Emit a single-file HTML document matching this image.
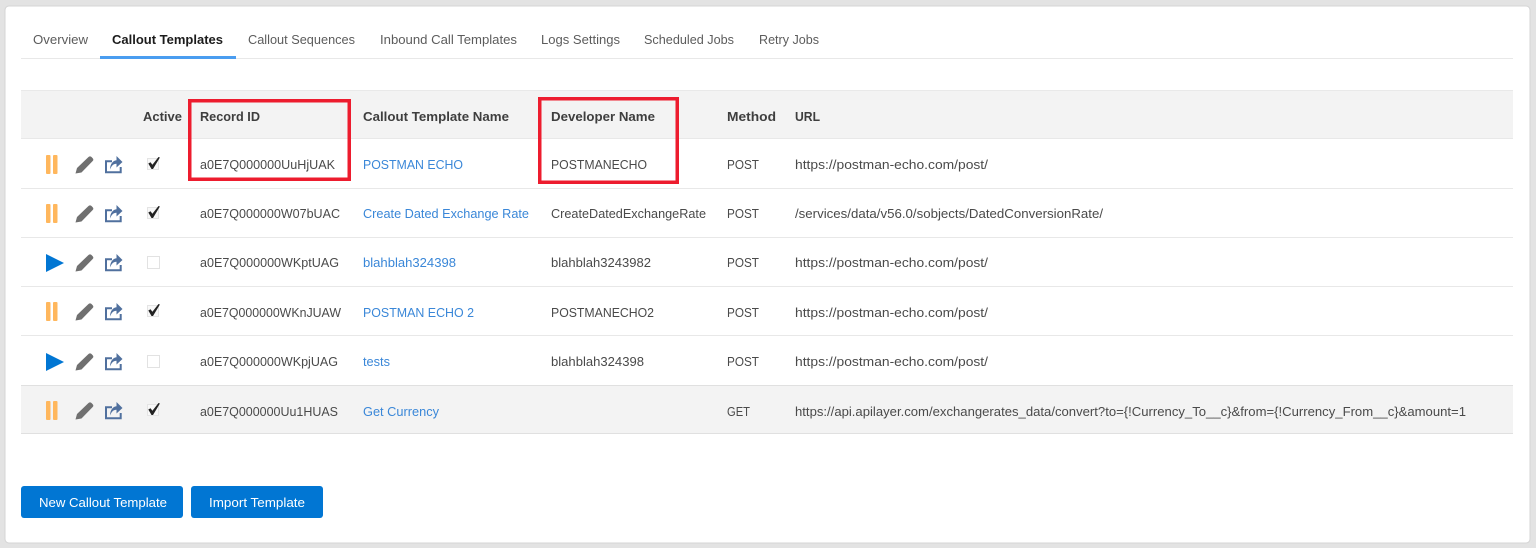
<!DOCTYPE html>
<html lang="en"><head><meta charset="utf-8"><title>Callout Templates</title>
<style>
html,body{margin:0;padding:0;background:#e3e3e3;width:1536px;height:548px;overflow:hidden}
svg{display:block;filter:blur(.3px)}
text{font-family:"Liberation Sans",sans-serif;font-size:13px;fill:#4a4a4a}
.tab{fill:#5c5c5c}
.b{font-weight:bold;fill:#3e3e3e}
.l{fill:#3a87d8}
.w{fill:#fff}
</style></head><body>
<svg width="1536" height="548" viewBox="0 0 1536 548" xmlns="http://www.w3.org/2000/svg">
<defs>
<g id="pause"><rect x="46" y="-10" width="4.500" height="19" rx="1" fill="#ffb75d"/><rect x="53" y="-10" width="4.500" height="19" rx="1" fill="#ffb75d"/></g>
<path id="play" d="M46-9 L64 0 L46 9Z" fill="#0176d3"/>
<path id="pencil" d="M75.500 8.500 L77 3 L88.500 -8 Q90 -9.300 91.500 -8 L92.700 -6.800 Q94 -5.300 92.700 -4 L81.500 7.500 Z" fill="#707070"/>
<g id="share"><path d="M112 -3.700 H106 V7.300 H120.700 V2" fill="none" stroke="#50709e" stroke-width="2"/><path d="M110 4.500 C110 -1 113 -4.500 116.500 -4.800 V-9 L122.500 -3 L116.500 2.500 V-1.300 C113.500 -1.300 111.500 0.500 110 4.500Z" fill="#50709e"/></g>
<g id="on"><rect x="147.500" y="-6.500" width="11" height="11" fill="#f8f8f8" stroke="#e4e4e4"/><path d="M148.300 -1.500 L150.500 -2.800 L152.400 -0.200 L158.500 -8 L159.900 -7.500 L153 4 L151.500 4 Z" fill="#222"/></g>
<rect id="off" x="147.500" y="-6.500" width="12" height="12" fill="#fff" stroke="#e2e2e2"/>
</defs>
<rect x="0" y="0" width="1536" height="548" fill="#e3e3e3"/>
<rect x="5" y="6" width="1525" height="537" rx="4" fill="#fff" stroke="#d4d4d4" stroke-width="1"/>

<rect x="21" y="58" width="1492" height="1" fill="#e8e8e8"/>
<rect x="100" y="56" width="136" height="3" fill="#4a9df0"/>
<text class="tab" x="33" y="44" textLength="55" lengthAdjust="spacingAndGlyphs">Overview</text>
<text class="b" style="fill:#1c1c1c" x="112" y="44" textLength="111" lengthAdjust="spacingAndGlyphs">Callout Templates</text>
<text class="tab" x="248" y="44" textLength="107" lengthAdjust="spacingAndGlyphs">Callout Sequences</text>
<text class="tab" x="380" y="44" textLength="137" lengthAdjust="spacingAndGlyphs">Inbound Call Templates</text>
<text class="tab" x="541" y="44" textLength="79" lengthAdjust="spacingAndGlyphs">Logs Settings</text>
<text class="tab" x="644" y="44" textLength="90" lengthAdjust="spacingAndGlyphs">Scheduled Jobs</text>
<text class="tab" x="759" y="44" textLength="60" lengthAdjust="spacingAndGlyphs">Retry Jobs</text>

<rect x="21" y="91" width="1492" height="47" fill="#f3f3f3"/>
<rect x="21" y="90" width="1492" height="1" fill="#e9e9e9"/>
<rect x="21" y="138" width="1492" height="1" fill="#e8e8e8"/>
<text class="b" x="143" y="121" textLength="39" lengthAdjust="spacingAndGlyphs">Active</text>
<text class="b" x="200" y="121" textLength="60" lengthAdjust="spacingAndGlyphs">Record ID</text>
<text class="b" x="363" y="121" textLength="146" lengthAdjust="spacingAndGlyphs">Callout Template Name</text>
<text class="b" x="551" y="121" textLength="104" lengthAdjust="spacingAndGlyphs">Developer Name</text>
<text class="b" x="727" y="121" textLength="49" lengthAdjust="spacingAndGlyphs">Method</text>
<text class="b" x="795" y="121" textLength="25" lengthAdjust="spacingAndGlyphs">URL</text>

<rect x="21" y="188" width="1492" height="1" fill="#e8e8e8"/>
<rect x="21" y="237" width="1492" height="1" fill="#e8e8e8"/>
<rect x="21" y="286" width="1492" height="1" fill="#e8e8e8"/>
<rect x="21" y="335" width="1492" height="1" fill="#e8e8e8"/>
<rect x="21" y="386" width="1492" height="47" fill="#f3f3f3"/>
<rect x="21" y="385" width="1492" height="1" fill="#e0e0e0"/>
<rect x="21" y="433" width="1492" height="1" fill="#e0e0e0"/>

<g transform="translate(0,165)"><use href="#pause"/><use href="#pencil"/><use href="#share"/><use href="#on"/></g>
<text x="200" y="169" textLength="135" lengthAdjust="spacingAndGlyphs">a0E7Q000000UuHjUAK</text>
<text class="l" x="363" y="169" textLength="100" lengthAdjust="spacingAndGlyphs">POSTMAN ECHO</text>
<text x="551" y="169" textLength="96" lengthAdjust="spacingAndGlyphs">POSTMANECHO</text>
<text x="727" y="169" textLength="32" lengthAdjust="spacingAndGlyphs">POST</text>
<text x="795" y="169" textLength="193" lengthAdjust="spacingAndGlyphs">https://postman-echo.com/post/</text>

<g transform="translate(0,214)"><use href="#pause"/><use href="#pencil"/><use href="#share"/><use href="#on"/></g>
<text x="200" y="218" textLength="140" lengthAdjust="spacingAndGlyphs">a0E7Q000000W07bUAC</text>
<text class="l" x="363" y="218" textLength="166" lengthAdjust="spacingAndGlyphs">Create Dated Exchange Rate</text>
<text x="551" y="218" textLength="155" lengthAdjust="spacingAndGlyphs">CreateDatedExchangeRate</text>
<text x="727" y="218" textLength="32" lengthAdjust="spacingAndGlyphs">POST</text>
<text x="795" y="218" textLength="308" lengthAdjust="spacingAndGlyphs">/services/data/v56.0/sobjects/DatedConversionRate/</text>

<g transform="translate(0,263)"><use href="#play"/><use href="#pencil"/><use href="#share"/><use href="#off"/></g>
<text x="200" y="267" textLength="139" lengthAdjust="spacingAndGlyphs">a0E7Q000000WKptUAG</text>
<text class="l" x="363" y="267" textLength="93" lengthAdjust="spacingAndGlyphs">blahblah324398</text>
<text x="551" y="267" textLength="100" lengthAdjust="spacingAndGlyphs">blahblah3243982</text>
<text x="727" y="267" textLength="32" lengthAdjust="spacingAndGlyphs">POST</text>
<text x="795" y="267" textLength="193" lengthAdjust="spacingAndGlyphs">https://postman-echo.com/post/</text>

<g transform="translate(0,312)"><use href="#pause"/><use href="#pencil"/><use href="#share"/><use href="#on"/></g>
<text x="200" y="317" textLength="141" lengthAdjust="spacingAndGlyphs">a0E7Q000000WKnJUAW</text>
<text class="l" x="363" y="317" textLength="111" lengthAdjust="spacingAndGlyphs">POSTMAN ECHO 2</text>
<text x="551" y="317" textLength="103" lengthAdjust="spacingAndGlyphs">POSTMANECHO2</text>
<text x="727" y="317" textLength="32" lengthAdjust="spacingAndGlyphs">POST</text>
<text x="795" y="317" textLength="193" lengthAdjust="spacingAndGlyphs">https://postman-echo.com/post/</text>

<g transform="translate(0,362)"><use href="#play"/><use href="#pencil"/><use href="#share"/><use href="#off"/></g>
<text x="200" y="366" textLength="138" lengthAdjust="spacingAndGlyphs">a0E7Q000000WKpjUAG</text>
<text class="l" x="363" y="366" textLength="27" lengthAdjust="spacingAndGlyphs">tests</text>
<text x="551" y="366" textLength="93" lengthAdjust="spacingAndGlyphs">blahblah324398</text>
<text x="727" y="366" textLength="32" lengthAdjust="spacingAndGlyphs">POST</text>
<text x="795" y="366" textLength="193" lengthAdjust="spacingAndGlyphs">https://postman-echo.com/post/</text>

<g transform="translate(0,411)"><use href="#pause"/><use href="#pencil"/><use href="#share"/><use href="#on"/></g>
<text x="200" y="416" textLength="138" lengthAdjust="spacingAndGlyphs">a0E7Q000000Uu1HUAS</text>
<text class="l" x="363" y="416" textLength="76" lengthAdjust="spacingAndGlyphs">Get Currency</text>
<text x="727" y="416" textLength="23" lengthAdjust="spacingAndGlyphs">GET</text>
<text x="795" y="416" textLength="671" lengthAdjust="spacingAndGlyphs">https://api.apilayer.com/exchangerates_data/convert?to={!Currency_To__c}&amp;from={!Currency_From__c}&amp;amount=1</text>

<rect x="189.750" y="100.750" width="159.500" height="78.500" fill="none" stroke="#ed1c2e" stroke-width="3.500"/>
<rect x="539.750" y="98.750" width="137.500" height="83.500" fill="none" stroke="#ed1c2e" stroke-width="3.500"/>

<rect x="21" y="486" width="162" height="32" rx="3" fill="#0176d3"/>
<rect x="191" y="486" width="132" height="32" rx="3" fill="#0176d3"/>
<text class="w" x="39" y="507" textLength="128" lengthAdjust="spacingAndGlyphs">New Callout Template</text>
<text class="w" x="209" y="507" textLength="96" lengthAdjust="spacingAndGlyphs">Import Template</text>
</svg>
</body></html>
